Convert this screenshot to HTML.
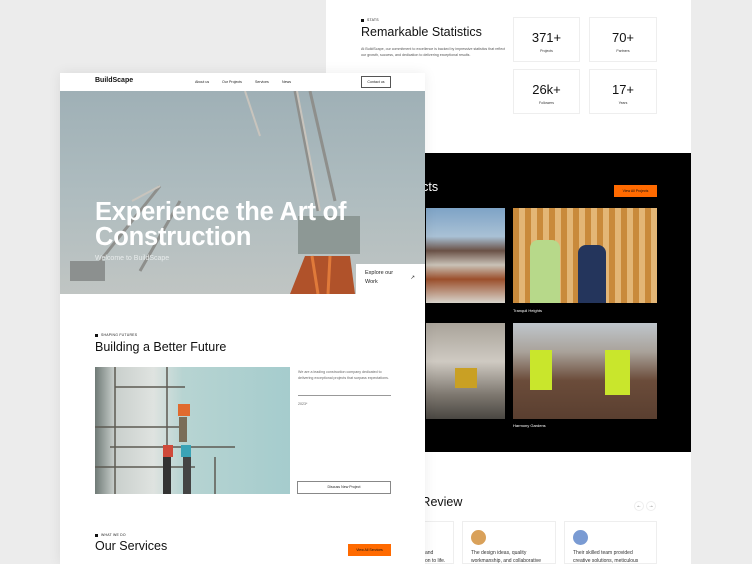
<!DOCTYPE html>
<html><head><style>
*{margin:0;padding:0;box-sizing:border-box}
html,body{width:752px;height:564px;overflow:hidden}
body{background:#ececec;font-family:"Liberation Sans",sans-serif;position:relative}
.a{position:absolute}
.lbl{font-size:3.5px;color:#222;letter-spacing:.2px}
.lbl:before{content:"";display:inline-block;width:3px;height:3px;background:#111;margin-right:3px;vertical-align:middle}
.box{border:1px solid #eee;background:#fff;text-align:center}
.box b{display:block;font-weight:400;font-size:13px;color:#111;margin-top:12px}
.box i{display:block;font-style:normal;font-size:3.5px;color:#333;margin-top:4px}
</style></head><body>
<!-- back page -->
<div class="a" style="left:326px;top:0;width:365px;height:564px;background:#fff"></div>
<div class="a lbl" style="left:361px;top:18px">STATS</div>
<div class="a" style="left:361px;top:25px;font-size:12.5px;color:#111">Remarkable Statistics</div>
<div class="a" style="left:361px;top:46px;width:150px;font-size:3.6px;line-height:6px;color:#555">At BuildScape, our commitment to excellence is backed by impressive statistics that reflect our growth, success, and dedication to delivering exceptional results.</div>
<div class="a box" style="left:513px;top:17px;width:67px;height:45px"><b>371+</b><i>Projects</i></div>
<div class="a box" style="left:589px;top:17px;width:68px;height:45px"><b>70+</b><i>Partners</i></div>
<div class="a box" style="left:513px;top:69px;width:67px;height:45px"><b>26k+</b><i>Followers</i></div>
<div class="a box" style="left:589px;top:69px;width:68px;height:45px"><b>17+</b><i>Years</i></div>
<div class="a" style="left:326px;top:153px;width:365px;height:299px;background:#000"></div>
<div class="a" style="left:393px;top:180px;font-size:12.5px;color:#fff">Projects</div>
<div class="a" style="left:614px;top:185px;width:43px;height:12px;background:#ff6a00;font-size:3.5px;color:#111;text-align:center;line-height:12px">View All Projects</div>
<div class="a" style="left:426px;top:208px;width:79px;height:95px;background:linear-gradient(180deg,#7ea3c6 0%,#a9c1d5 30%,#6a5146 45%,#c9c2b7 60%,#9b4f2c 75%,#d8d4cc 100%)"></div>
<div class="a" style="left:513px;top:208px;width:144px;height:95px;background:repeating-linear-gradient(90deg,#c98a3b 0 6px,#e3b676 6px 12px);"></div>
<div class="a" style="left:530px;top:240px;width:30px;height:63px;background:#b7d98a;border-radius:8px 8px 0 0"></div>
<div class="a" style="left:578px;top:245px;width:28px;height:58px;background:#24355c;border-radius:8px 8px 0 0"></div>
<div class="a" style="left:513px;top:308px;font-size:4px;color:#fff">Tranquil Heights</div>
<div class="a" style="left:426px;top:323px;width:79px;height:96px;background:linear-gradient(180deg,#a9a39a 0%,#cfcac2 40%,#7d776f 75%,#4a4742 100%)"></div>
<div class="a" style="left:455px;top:368px;width:22px;height:20px;background:#c9a024"></div>
<div class="a" style="left:513px;top:323px;width:144px;height:96px;background:linear-gradient(180deg,#bfc6cc 0%,#a9a29a 30%,#6b4c3a 60%,#5a3f30 100%)"></div>
<div class="a" style="left:530px;top:350px;width:22px;height:40px;background:#c9e62c"></div>
<div class="a" style="left:605px;top:350px;width:25px;height:45px;background:#c9e62c"></div>
<div class="a" style="left:513px;top:423px;font-size:4px;color:#fff">Harmony Gardens</div>
<div class="a" style="left:386px;top:495px;font-size:12.5px;color:#111">Client Review</div>
<div class="a" style="left:634px;top:501px;width:10px;height:10px;border:1px solid #eee;border-radius:50%;font-size:5px;text-align:center;line-height:9px">←</div>
<div class="a" style="left:646px;top:501px;width:10px;height:10px;border:1px solid #eee;border-radius:50%;font-size:5px;text-align:center;line-height:9px">→</div>
<div class="a box" style="left:380px;top:521px;width:74px;height:43px"></div>
<div class="a" style="left:425px;top:549px;font-size:5px;line-height:8px;color:#333">and<br>on to life.</div>
<div class="a box" style="left:462px;top:521px;width:94px;height:43px;text-align:left;padding:8px 8px"><div style="width:15px;height:15px;border-radius:50%;background:#d9a15a"></div><div style="font-size:5px;line-height:8px;color:#333;margin-top:4px">The design ideas, quality workmanship, and collaborative</div></div>
<div class="a box" style="left:564px;top:521px;width:93px;height:43px;text-align:left;padding:8px 8px"><div style="width:15px;height:15px;border-radius:50%;background:#7a9bd3"></div><div style="font-size:5px;line-height:8px;color:#333;margin-top:4px">Their skilled team provided creative solutions, meticulous</div></div>
<!-- front page -->
<div class="a" style="left:60px;top:73px;width:365px;height:491px;background:#fff;box-shadow:0 0 12px rgba(0,0,0,.08)"></div>
<div class="a" style="left:95px;top:77px;font-size:7px;font-weight:700;color:#111">BuildScape</div>
<div class="a" style="left:195px;top:80px;font-size:3.6px;color:#222">About us</div>
<div class="a" style="left:222px;top:80px;font-size:3.6px;color:#222">Our Projects</div>
<div class="a" style="left:255px;top:80px;font-size:3.6px;color:#222">Services</div>
<div class="a" style="left:282px;top:80px;font-size:3.6px;color:#222">News</div>
<div class="a" style="left:361px;top:76px;width:30px;height:12px;border:1px solid #555;font-size:3.6px;text-align:center;line-height:10px;color:#222">Contact us</div>
<div class="a" style="left:60px;top:91px;width:365px;height:203px;background:linear-gradient(180deg,#9fb0b6 0%,#aebcbf 50%,#c0c5c3 100%);overflow:hidden">
<svg width="365" height="203" style="position:absolute;left:0;top:0">
<g stroke="#8e8f8c" stroke-width="3" fill="none"><path d="M235 0 L258 120 M250 0 L275 110 M40 170 L100 95 M80 180 L120 110"/></g>
<g stroke="#c8c4bd" stroke-width="2" fill="none"><path d="M237 0 L260 120 M185 0 L200 45 M72 110 L100 95"/></g>
<rect x="238" y="125" width="62" height="38" fill="#8d9895"/>
<path d="M230 203 L245 165 L290 165 L295 203 Z" fill="#b0522a"/>
<path d="M252 165 L258 203 M270 165 L268 203" stroke="#e07a3a" stroke-width="3"/>
<rect x="10" y="170" width="35" height="20" fill="#8c908f"/>
</svg>
</div>
<div class="a" style="left:95px;top:200px;font-size:25.5px;line-height:25px;font-weight:700;color:#fff;letter-spacing:-.2px">Experience the Art of<br>Construction</div>
<div class="a" style="left:95px;top:255px;font-size:7px;color:#e8ecec">Welcome to BuildScape</div>
<div class="a" style="left:356px;top:264px;width:69px;height:30px;background:#fff;font-size:5.5px;line-height:9px;color:#222;padding:5px 9px">Explore our<br>Work<span style="position:absolute;right:10px;top:10px">↗</span></div>
<div class="a lbl" style="left:95px;top:333px">SHAPING FUTURES</div>
<div class="a" style="left:95px;top:340px;font-size:12.5px;color:#111">Building a Better Future</div>
<div class="a" style="left:95px;top:367px;width:195px;height:127px;background:linear-gradient(90deg,#6f7a76 0%,#c9cfcc 10%,#dfe3e0 30%,#b7d4d2 45%,#a5cccd 100%);overflow:hidden">
<svg width="195" height="127" style="position:absolute"><g stroke="#5d5a52" stroke-width="1.5"><path d="M20 0V127M72 0V127M120 90V127M0 60H90M15 80H140M0 100H100M20 20H90"/></g>
<rect x="83" y="37" width="12" height="12" fill="#e06a2e"/><rect x="68" y="78" width="10" height="12" fill="#d04a3a"/><rect x="86" y="78" width="10" height="12" fill="#3aa3b6"/>
<rect x="84" y="50" width="8" height="25" fill="#7a6d58"/><rect x="68" y="90" width="8" height="37" fill="#333"/><rect x="88" y="90" width="8" height="37" fill="#444"/></svg></div>
<div class="a" style="left:298px;top:369px;width:93px;font-size:3.6px;line-height:6px;color:#666">We are a leading construction company dedicated to delivering exceptional projects that surpass expectations.</div>
<div class="a" style="left:298px;top:395px;width:93px;height:1px;background:#999"></div>
<div class="a" style="left:298px;top:402px;font-size:3.6px;color:#666">2023*</div>
<div class="a" style="left:297px;top:481px;width:94px;height:13px;border:1px solid #888;font-size:3.6px;text-align:center;line-height:11px;color:#222">Discuss New Project</div>
<div class="a lbl" style="left:95px;top:533px">WHAT WE DO</div>
<div class="a" style="left:95px;top:539px;font-size:12.5px;color:#111">Our Services</div>
<div class="a" style="left:348px;top:544px;width:43px;height:12px;background:#ff6a00;font-size:3.5px;text-align:center;line-height:12px;color:#111">View All Services</div>
</body></html>
